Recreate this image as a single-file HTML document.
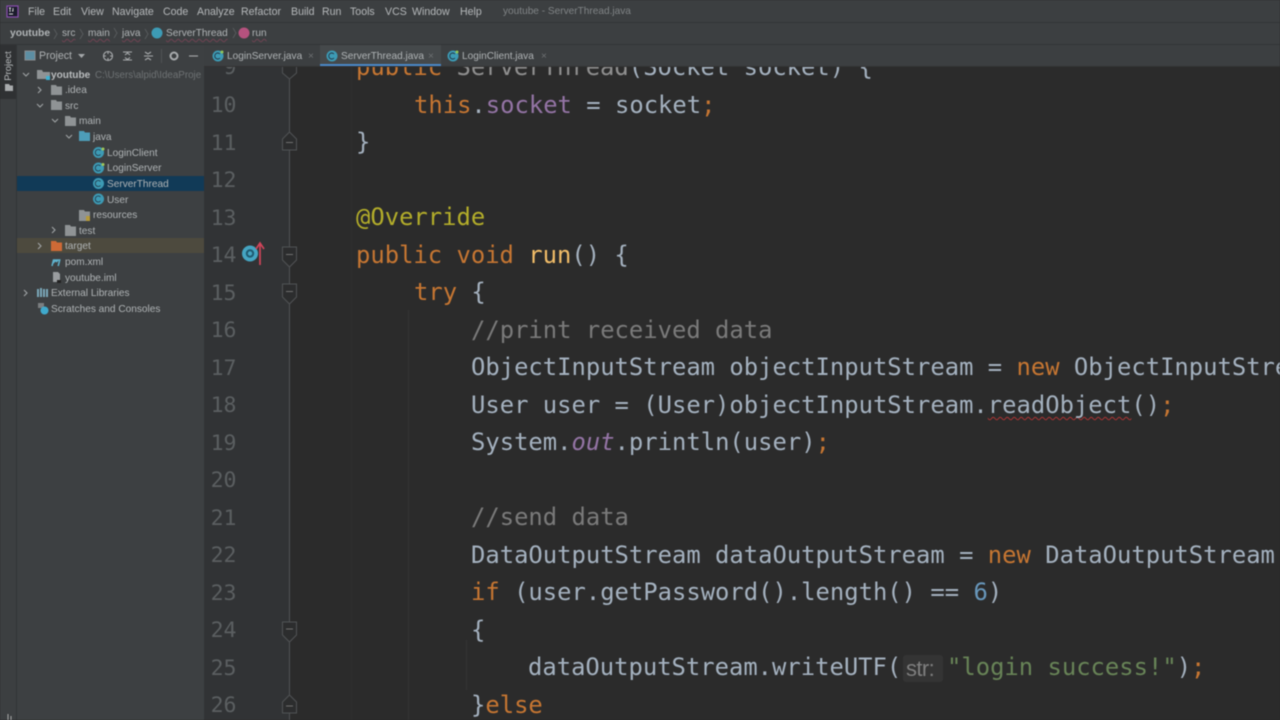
<!DOCTYPE html>
<html><head><meta charset="utf-8"><style>
html,body{margin:0;padding:0;width:1280px;height:720px;overflow:hidden;background:#2b2b2b}
#r{position:relative;width:1280px;height:720px;overflow:hidden;filter:blur(.45px);font-family:"Liberation Sans",sans-serif}
.b{position:absolute}
.t{position:absolute;white-space:nowrap;font-size:10.1px;line-height:14px;color:#b0b4b6;margin-top:1px}
.m{position:absolute;white-space:nowrap;top:5px;font-size:10.6px;line-height:14px;color:#b5b8ba}
.c{position:absolute;left:0;white-space:pre;font-family:"DejaVu Sans Mono",monospace;font-size:23.85px;line-height:37.5px;color:#a4b1bf;margin-top:1px}
.n{position:absolute;left:204px;width:32.500px;text-align:right;font-family:"DejaVu Sans Mono",monospace;font-size:21.5px;line-height:37.5px;color:#5b5f61;margin-top:1px}
.k{color:#c67632}.f{color:#9474a5}.a{color:#b3ad2a}.g{color:#7d7d7d}.s{color:#688457}.d{color:#6897bb}
.w{text-decoration:underline wavy #a33;text-decoration-thickness:1px;text-underline-offset:3px;text-decoration-skip-ink:none}
.u{text-decoration:underline wavy #6f4252;text-decoration-thickness:1px;text-underline-offset:2px;text-decoration-skip-ink:none}
</style></head><body><div id="r">
<div class="b" style="left:0;top:0;width:1280px;height:45px;background:#3c3f41"></div>
<div class="b" style="left:0;top:22px;width:1280px;height:1px;background:#323537"></div>
<div class="b" style="left:0;top:44px;width:1280px;height:1px;background:#323537"></div>
<div class="b" style="left:0;top:45px;width:17px;height:675px;background:#3c3f41"></div>
<div class="b" style="left:0;top:45px;width:17px;height:54px;background:#2f3133"></div>
<div class="b" style="left:16px;top:45px;width:1px;height:675px;background:#323537"></div>
<div class="b" style="left:17px;top:45px;width:187px;height:675px;background:#3d4042"></div>
<div class="b" style="left:204px;top:45px;width:86px;height:675px;background:#313335"></div>
<div class="b" style="left:290px;top:66px;width:990px;height:654px;background:#2b2b2b"></div>
<div class="b" style="left:289px;top:66px;width:1px;height:654px;background:#505355"></div>
<div class="b" style="left:351px;top:66px;width:1px;height:654px;background:#2f2f2f"></div>
<div class="b" style="left:408px;top:310px;width:1px;height:410px;background:#333"></div>
<div class="b" style="left:466px;top:640px;width:1px;height:50px;background:#333"></div>

<!-- code -->
<div class="n" style="top:48px">9</div>
<div class="c" style="top:48px;left:356px"><span class="k">public</span> <span style="color:#8f8f8f">ServerThread</span>(Socket socket) {</div>
<div class="c" style="top:86px;left:414px"><span class="k">this</span>.<span class="f">socket</span> = socket<span class="k">;</span></div>
<div class="c" style="top:123px;left:356px">}</div>
<div class="c" style="top:198px;left:356px"><span class="a">@Override</span></div>
<div class="c" style="top:236px;left:356px"><span class="k">public void</span> <span style="color:#f2bd68">run</span>() {</div>
<div class="c" style="top:273px;left:414px"><span class="k">try</span> {</div>
<div class="c" style="top:311px;left:471px;color:#7a7a7a">//print received data</div>
<div class="c" style="top:348px;left:471px">ObjectInputStream objectInputStream = <span class="k">new</span> ObjectInputStream(socket.getInputStream());</div>
<div class="c" style="top:386px;left:471px">User user = (User)objectInputStream.<span class="w">readObject</span>()<span class="k">;</span></div>
<div class="c" style="top:423px;left:471px">System.<span class="f" style="font-style:italic">out</span>.println(user)<span class="k">;</span></div>
<div class="c" style="top:498px;left:471px;color:#7a7a7a">//send data</div>
<div class="c" style="top:536px;left:471px">DataOutputStream dataOutputStream = <span class="k">new</span> DataOutputStream</div>
<div class="c" style="top:573px;left:471px"><span class="k">if</span> (user.getPassword().length() == <span class="d">6</span>)</div>
<div class="c" style="top:611px;left:471px">{</div>
<div class="c" style="top:648px;left:528px">dataOutputStream.writeUTF(</div>
<div class="b" style="left:903px;top:655px;width:40px;height:27px;background:#343434;border-radius:3px"></div>
<div class="b" style="left:906px;top:655px;font-size:22px;line-height:27px;color:#7e7e7e;white-space:nowrap;letter-spacing:-.6px">str:</div>
<div class="c" style="top:648px;left:947px"><span class="s">"login success!"</span>)<span class="k">;</span></div>
<div class="c" style="top:686px;left:471px">}<span class="k">else</span></div>

<!-- tab bar over code -->
<div class="b" style="left:204px;top:45px;width:1076px;height:21px;background:#3c3f41"></div>
<div class="b" style="left:320px;top:45px;width:121px;height:21px;background:#45494b"></div>
<div class="b" style="left:320px;top:63.500px;width:121px;height:2.500px;background:#4a88c7"></div>
<div class="b" style="left:204px;top:66px;width:1076px;height:1px;background:#323232"></div>
<div class="t" style="left:227px;top:49px">LoginServer.java</div><div class="t" style="left:308px;top:49px;color:#6d7072">×</div>
<div class="t" style="left:341px;top:49px">ServerThread.java</div><div class="t" style="left:428px;top:49px;color:#6d7072">×</div>
<div class="t" style="left:462px;top:49px">LoginClient.java</div><div class="t" style="left:541px;top:49px;color:#6d7072">×</div>

<!-- numbers -->
<div class="n" style="top:86px">10</div><div class="n" style="top:124px">11</div><div class="n" style="top:161px">12</div><div class="n" style="top:199px">13</div><div class="n" style="top:236px">14</div><div class="n" style="top:274px">15</div><div class="n" style="top:311px">16</div><div class="n" style="top:349px">17</div><div class="n" style="top:386px">18</div><div class="n" style="top:424px">19</div><div class="n" style="top:461px">20</div><div class="n" style="top:499px">21</div><div class="n" style="top:536px">22</div><div class="n" style="top:574px">23</div><div class="n" style="top:611px">24</div><div class="n" style="top:649px">25</div><div class="n" style="top:686px">26</div>

<!-- menu -->
<div class="m" style="left:28px">File</div><div class="m" style="left:53px">Edit</div><div class="m" style="left:81px">View</div><div class="m" style="left:112px">Navigate</div><div class="m" style="left:163px">Code</div><div class="m" style="left:197px">Analyze</div><div class="m" style="left:241px">Refactor</div><div class="m" style="left:291px">Build</div><div class="m" style="left:322px">Run</div><div class="m" style="left:350px">Tools</div><div class="m" style="left:385px">VCS</div><div class="m" style="left:412px">Window</div><div class="m" style="left:460px">Help</div><div class="m" style="left:503px;color:#808486;font-size:10.100px">youtube - ServerThread.java</div>

<!-- breadcrumbs -->
<div class="t" style="left:10px;top:26px;font-weight:bold;font-size:10.3px">youtube</div>
<div class="t" style="left:62px;top:26px"><span class="u">src</span></div><div class="t" style="left:88px;top:26px"><span class="u">main</span></div><div class="t" style="left:122px;top:26px"><span class="u">java</span></div><div class="t" style="left:166px;top:26px"><span class="u">ServerThread</span></div><div class="t" style="left:252px;top:26px"><span class="u">run</span></div>
<div class="t" style="left:39px;top:48px;font-size:10.6px;color:#aeb1b3">Project</div>

<!-- tree -->
<div class="b" style="left:17px;top:176px;width:187px;height:15px;background:#113a57"></div>
<div class="b" style="left:17px;top:238px;width:187px;height:15px;background:#4d4a3e"></div>
<div class="t" style="left:51px;top:68px;font-weight:bold;font-size:10.1px;color:#b9bcbe">youtube</div>
<div class="t" style="left:95px;top:68px;color:#6e7274;font-size:9.8px;width:109px;overflow:hidden">C:\Users\alpid\IdeaProje</div>
<div class="t" style="left:65px;top:83px">.idea</div>
<div class="t" style="left:65px;top:99px">src</div>
<div class="t" style="left:79px;top:114px">main</div>
<div class="t" style="left:93px;top:130px">java</div>
<div class="t" style="left:107px;top:146px">LoginClient</div>
<div class="t" style="left:107px;top:161px">LoginServer</div>
<div class="t" style="left:107px;top:177px">ServerThread</div>
<div class="t" style="left:107px;top:193px">User</div>
<div class="t" style="left:93px;top:208px">resources</div>
<div class="t" style="left:79px;top:224px">test</div>
<div class="t" style="left:65px;top:239px">target</div>
<div class="t" style="left:65px;top:255px">pom.xml</div>
<div class="t" style="left:65px;top:271px">youtube.iml</div>
<div class="t" style="left:51px;top:286px">External Libraries</div>
<div class="t" style="left:51px;top:302px">Scratches and Consoles</div>
<div class="b" style="left:-8px;top:60px;width:34px;height:12px;transform:rotate(-90deg);font-size:9.5px;line-height:12px;color:#b9bcbe;text-align:center">Project</div>

<svg class="b" style="left:0;top:0" width="1280" height="720" fill="none">
<rect x="7" y="6" width="11" height="11" fill="#1c1c2c" stroke="#8a4fb0" stroke-width="1.2"/><path d="M9 8h2M10 8v4M13 8v3h-1M9 14h4" stroke="#ddd" stroke-width=".9"/>
<g stroke="#5c6062" stroke-width=".8"><path d="M54 29l3 5-3 5M80 29l3 5-3 5M114 28l3 5-3 5M145 29l3 5-3 5M233 28l3 5-3 5"/></g>
<circle cx="157" cy="33" r="5.5" fill="#3d9bb5"/><circle cx="244" cy="33" r="5.5" fill="#b5527e"/>
<rect x="25" y="51" width="10" height="9" fill="#5c8ea3" stroke="#8a8e90"/>
<path d="M78 54h7l-3.500 4z" fill="#a4a7a9"/>
<g stroke="#a8abad" stroke-width="1.100"><circle cx="108" cy="56" r="4.500"/><path d="M108 51v3M108 58v3M103 56h3M110 56h3"/><path d="M123 52h9M123 60h9M125 55l2.500-2 2.500 2M125 57.500l2.500 2 2.500-2M144 56h9M145 52l3 2 3-2M145 60l3-2 3 2"/><path d="M189 56h9"/></g>
<circle cx="174" cy="56" r="3.500" stroke="#a8abad" stroke-width="2"/>
<path d="M161.500 49v14" stroke="#505355"/>
<path d="M5 84h4l1 1.500h3V91H5z" fill="#a8abad"/>
<circle cx="218" cy="56" r="5.500" fill="#3d9bb5"/><circle cx="332" cy="56" r="5.500" fill="#3d9bb5"/><circle cx="453" cy="56" r="5.500" fill="#3d9bb5"/>
<circle cx="222" cy="52" r="1.500" fill="#8fc65a"/><circle cx="457" cy="52" r="1.500" fill="#8fc65a"/>
<path d="M220 54a3 3 0 1 0 0 4M334 54a3 3 0 1 0 0 4M455 54a3 3 0 1 0 0 4" stroke="#234" stroke-width=".9"/>
<g stroke="#a0a3a5" stroke-width="1.100">
<path d="M23 73l3 3 3-3"/><path d="M38 87l3 3-3 3"/><path d="M37 104l3 3 3-3"/><path d="M52 119l3 3 3-3"/><path d="M66 135l3 3 3-3"/><path d="M52 227l3 3-3 3"/><path d="M38 243l3 3-3 3"/><path d="M24 290l3 3-3 3"/>
</g>
<g fill="#8f9395">
<path d="M37 70h5l1 2h7v7H37z"/><path d="M51 85h5l1 1.500h5V95H51z"/><path d="M51 100h5l1 1.500h5V110H51z"/><path d="M65 116h5l1 1.500h5V126H65z"/><path d="M79 210h5l1 1.500h5V221H79z"/><path d="M65 225h5l1 1.500h5V236H65z"/>
</g>
<path d="M79 131h5l1 1.500h5V141H79z" fill="#4d9db8"/>
<path d="M51 241h5l1 1.500h5V251H51z" fill="#cf6a36"/>
<rect x="46" y="76" width="4" height="4" fill="#3fb0d0"/><rect x="86" y="216" width="4" height="5" fill="#b59a3a"/>
<g fill="#3d9bb5"><circle cx="98.500" cy="152.500" r="5.500"/><circle cx="98.500" cy="168" r="5.500"/><circle cx="98.500" cy="183.500" r="5.500"/><circle cx="98.500" cy="199" r="5.500"/></g>
<path d="M100.500 150.500a3 3 0 1 0 0 4M100.500 166a3 3 0 1 0 0 4M100.500 181.500a3 3 0 1 0 0 4M100.500 197a3 3 0 1 0 0 4" stroke="#234" stroke-width=".8"/>
<circle cx="103" cy="149" r="1.500" fill="#a0c85a"/><circle cx="103" cy="164.500" r="1.500" fill="#a0c85a"/>
<path d="M52 266l1.500-6h1l-.5 2 2-2h1l-.8 2 2-2h1.500l-1.500 6" stroke="#5fb3ce" stroke-width="1.500"/>
<path d="M53 272h5l2 2v8h-7z" fill="#9a9da0"/><rect x="57" y="280" width="4" height="3" fill="#222"/>
<path d="M38 289v8M41 288v9M44 289v8M47 289v8" stroke="#7aa8b8" stroke-width="2"/>
<path d="M38 303h6v5h-6z" fill="#7a7e80"/><circle cx="44.500" cy="310.500" r="4" fill="#3fa9cc"/>
<g stroke="#505355" fill="#2c2d2e" stroke-width="1">
<path d="M282.500 67v6l7 6 7-6v-6"/>
<path d="M282.500 150v-11l7-7 7 7v11z"/>
<path d="M282.500 247h14v13l-7 7-7-7z"/>
<path d="M282.500 284h14v13l-7 7-7-7z"/>
<path d="M282.500 622h14v13l-7 7-7-7z"/>
<path d="M282.500 713v-11l7-7 7 7v11z"/>
</g>
<path d="M286 142.500h7M286 254.500h7M286 291.500h7M286 629h7M286 706h7" stroke="#707070"/>
<circle cx="250" cy="253.500" r="8" fill="#45a5c2"/><circle cx="250" cy="253.500" r="3.200" stroke="#1f5a70" stroke-width="2"/>
<path d="M260 265v-22M256 249l4-6 4 6" stroke="#d0455a" stroke-width="1.700"/>
<path d="M8 714v6M11 716v4" stroke="#aaa"/>
</svg>
</div></body></html>
